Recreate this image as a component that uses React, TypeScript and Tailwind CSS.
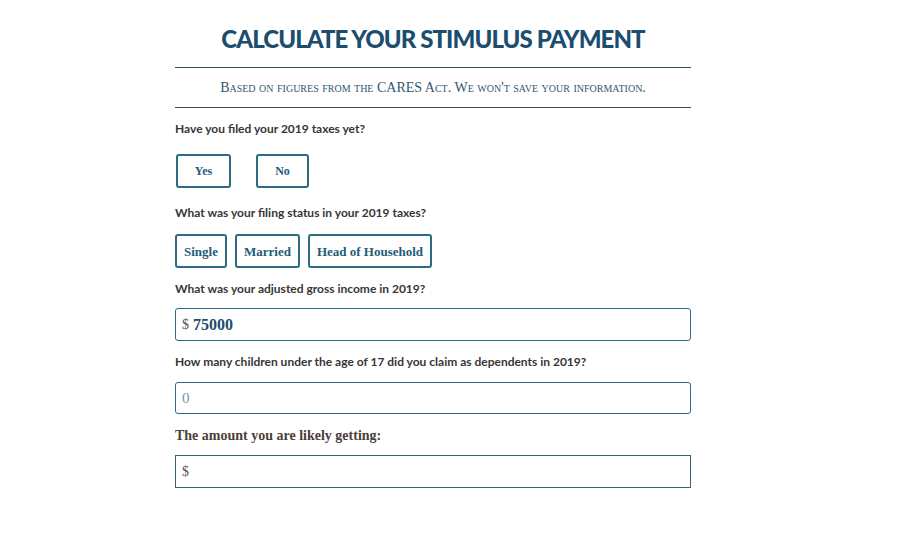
import { useState } from "react";

const sans = "font-['Lato','Open_Sans',sans-serif]";
const serif = "font-['Liberation_Serif','DejaVu_Serif',serif]";

function Choice({ label, active, onClick, className }: { label: string; active: boolean; onClick: () => void; className?: string }) {
  return (
    <button
      type="button"
      onClick={onClick}
      className={`${serif} h-[34px] rounded-[3px] border-2 border-[#2b6c84] font-bold leading-none text-[#245c78] ${active ? "bg-[#eef5f8]" : "bg-white"} ${className ?? ""}`}
    >
      {label}
    </button>
  );
}

export default function App() {
  const [filed, setFiled] = useState<string | null>(null);
  const [status, setStatus] = useState<string | null>(null);
  const [income, setIncome] = useState("75000");
  const [kids, setKids] = useState("");

  return (
    <main className="min-h-screen bg-white">
      <div className="ml-[175px] w-[516px] pt-[24px]">
        <h1 className={`${sans} text-center text-[24px] font-black uppercase leading-[30px] tracking-[-0.9px] text-[#1b4d6e]`}>
          Calculate your stimulus payment
        </h1>
        <div className="mt-[13px] flex h-[41px] items-center justify-center border-y border-[#34505f]">
          <p className={`${serif} text-center text-[14px] leading-5 text-[#35566f] [font-variant:small-caps]`}>
            Based on figures from the CARES Act. We won't save your information.
          </p>
        </div>

        <p className={`${sans} mt-[13px] text-[12px] font-bold leading-4 text-[#363636]`}>Have you filed your 2019 taxes yet?</p>
        <div className="mt-[17px] flex gap-[25px] pl-px">
          <Choice label="Yes" active={filed === "yes"} onClick={() => setFiled("yes")} className="w-[55px] text-[12px]" />
          <Choice label="No" active={filed === "no"} onClick={() => setFiled("no")} className="w-[53px] text-[12px]" />
        </div>

        <p className={`${sans} mt-[17px] text-[12px] font-bold leading-4 text-[#363636]`}>What was your filing status in your 2019 taxes?</p>
        <div className="mt-[13px] flex gap-[8px]">
          {["Single", "Married", "Head of Household"].map((s) => (
            <Choice key={s} label={s} active={status === s} onClick={() => setStatus(s)} className="px-[7px] text-[13px]" />
          ))}
        </div>

        <p className={`${sans} mt-[13px] text-[12px] font-bold leading-4 text-[#363636]`}>What was your adjusted gross income in 2019?</p>
        <div className="mt-[11px] flex h-[33px] items-center rounded-[3px] border border-[#2b6c84] px-[6px]">
          <span className={`${serif} text-[14px] text-[#555]`}>$</span>
          <input
            value={income}
            onChange={(e) => setIncome(e.target.value)}
            className={`${serif} ml-[4px] w-full bg-transparent text-[16px] font-bold text-[#1b4d6e] outline-none`}
          />
        </div>

        <p className={`${sans} mt-[13px] text-[12px] font-bold leading-4 text-[#363636]`}>How many children under the age of 17 did you claim as dependents in 2019?</p>
        <div className="mt-[12px] flex h-[32px] items-center rounded-[3px] border border-[#2b6c84] px-[6px]">
          <input
            value={kids}
            placeholder="0"
            onChange={(e) => setKids(e.target.value)}
            className={`${serif} w-full bg-transparent text-[15px] text-[#1b4d6e] outline-none placeholder:text-[#6f94ab]`}
          />
        </div>

        <p className={`${serif} mt-[13px] text-[14px] font-bold leading-[18px] text-[#4a4038]`}>The amount you are likely getting:</p>
        <div className="mt-[10px] flex h-[33px] items-center border border-[#3a6275] px-[6px]">
          <span className={`${serif} text-[14px] text-[#555]`}>$</span>
        </div>
      </div>
    </main>
  );
}
